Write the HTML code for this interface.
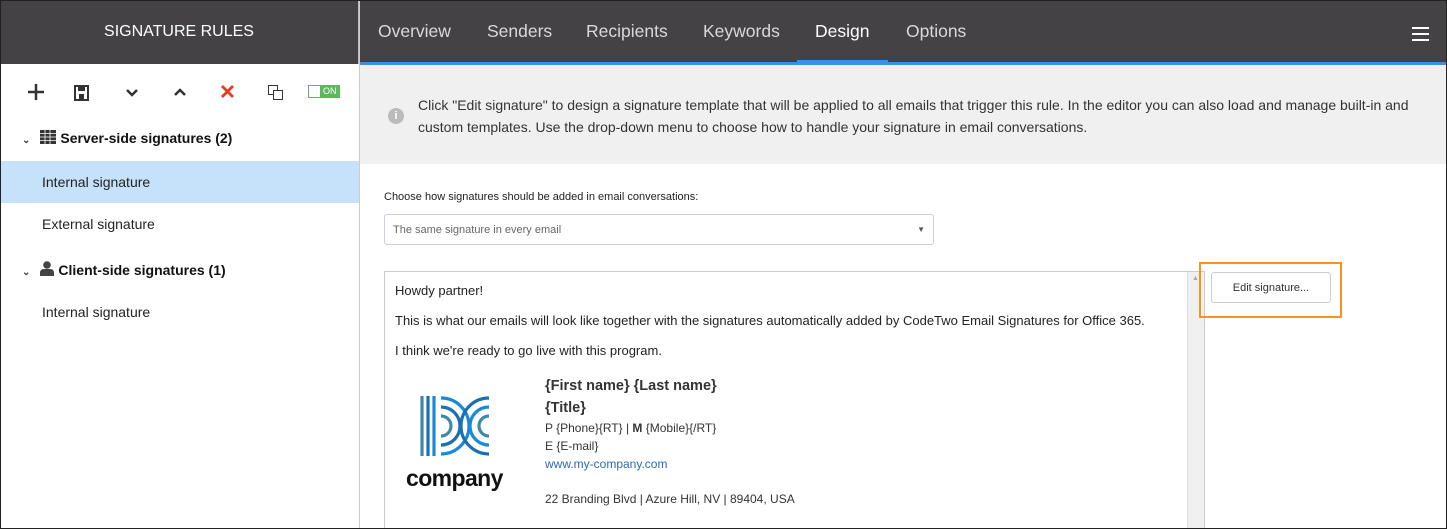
<!DOCTYPE html>
<html><head><meta charset="utf-8">
<style>
*{box-sizing:border-box;margin:0;padding:0}
html,body{width:1447px;height:529px;overflow:hidden}
body{background:#fff;font-family:"Liberation Sans",sans-serif;position:relative}
.frame{position:absolute;left:0;top:0;width:1447px;height:529px;border:1px solid #222;pointer-events:none;z-index:10}
.side{position:absolute;left:0;top:0;width:360px;height:529px;border-right:1px solid #ccc}
.shead{height:64px;background:#444245;color:#fff;font-size:16px;text-align:center;line-height:64px;border-right:1px solid #bbb}
.tool{position:absolute;top:82px;height:20px}
.grp{position:absolute;left:22px;font-size:14px;font-weight:bold;color:#111}
.item{position:absolute;left:0;width:359px;height:42px;line-height:42px;padding-left:42px;font-size:14px;color:#222}
.top{position:absolute;left:360px;top:0;width:1087px;height:62px;background:#444245}
.tab{position:absolute;top:0;line-height:62px;font-size:17.5px;color:#d9d9d9}
.blue{position:absolute;left:360px;top:62px;width:1087px;height:3px;background:#3c8fe8}
.info{position:absolute;left:360px;top:65px;width:1087px;height:99px;background:#f0f0f0;font-size:14px;color:#333;line-height:22px;padding:29px 24px 0 58px}
.sig{position:absolute;left:384px;top:271px;width:821px;height:258px;border:1px solid #ccc;border-bottom:none;overflow:hidden}
.sig p{font-size:13px;color:#222;margin-left:10px}
</style></head><body>
<div class="frame"></div>
<div class="side">
<div class="shead">SIGNATURE RULES</div>
<svg class="tool" style="left:27px" width="18" height="20"><path d="M9 2v16M1 10h16" stroke="#333" stroke-width="2.5"/></svg>
<svg class="tool" style="left:73px" width="18" height="20"><rect x="2" y="4" width="13" height="14" fill="none" stroke="#333" stroke-width="2"/><rect x="5" y="5" width="7" height="4" fill="#333"/><rect x="6" y="12" width="5" height="6" fill="#333"/></svg>
<svg class="tool" style="left:124px" width="16" height="20"><path d="M3 8l5 5 5-5" fill="none" stroke="#333" stroke-width="2.5"/></svg>
<svg class="tool" style="left:172px" width="16" height="20"><path d="M3 13l5-5 5 5" fill="none" stroke="#333" stroke-width="2.5"/></svg>
<svg class="tool" style="left:220px" width="16" height="20"><path d="M2 4l11 11M13 4L2 15" stroke="#e0401c" stroke-width="2.8"/></svg>
<svg class="tool" style="left:267px" width="18" height="20"><rect x="1.5" y="3.5" width="9" height="9" fill="none" stroke="#333"/><rect x="6.5" y="8.5" width="9" height="9" fill="#fff" stroke="#333"/></svg>
<div style="position:absolute;left:308px;top:85px;width:32px;height:13px;background:#5cb85c;border:1px solid #5cb85c"><div style="width:11px;height:11px;background:#fff"></div><span style="position:absolute;left:14px;top:0;font-size:9px;color:#fff;line-height:11px">ON</span></div>
<div class="grp" style="top:130px"><span style="font-size:10px;color:#444;margin-right:10px">&#8964;</span><svg width="16" height="14" style="vertical-align:-1px;margin-right:4px"><rect x="0" y="0" width="16" height="14" fill="#333"/><path d="M0 3.5h16M0 7h16M0 10.5h16M5 0v14M10 0v14" stroke="#fff" stroke-width="0.8"/></svg>Server-side signatures (2)</div>
<div class="item" style="top:161px;background:#c6e1fa">Internal signature</div>
<div class="item" style="top:203px">External signature</div>
<div class="grp" style="top:261px"><span style="font-size:10px;color:#444;margin-right:10px">&#8964;</span><svg width="14" height="15" style="vertical-align:-1px;margin-right:4px"><circle cx="7" cy="4" r="3.8" fill="#444"/><path d="M0 15v-3q0-4 4-4h6q4 0 4 4v3z" fill="#444"/></svg>Client-side signatures (1)</div>
<div class="item" style="top:291px">Internal signature</div>
</div>
<div class="top">
<span class="tab" style="left:18px">Overview</span>
<span class="tab" style="left:127px">Senders</span>
<span class="tab" style="left:226px">Recipients</span>
<span class="tab" style="left:343px">Keywords</span>
<span class="tab" style="left:455px;color:#fff">Design</span>
<span class="tab" style="left:546px">Options</span>
<div style="position:absolute;left:1052px;top:27px;width:17px;height:2px;background:#fff;box-shadow:0 6px 0 #fff,0 12px 0 #fff"></div>
</div>
<div class="blue"></div>
<div style="position:absolute;left:797px;top:60px;width:91px;height:3px;background:#3c8fe8"></div>
<div class="info"><span style="position:absolute;left:28px;top:43px;width:16px;height:16px;border-radius:50%;background:#bbb;color:#fff;font-size:11px;font-weight:bold;text-align:center;line-height:16px">i</span>Click "Edit signature" to design a signature template that will be applied to all emails that trigger this rule. In the editor you can also load and manage built-in and custom templates. Use the drop-down menu to choose how to handle your signature in email conversations.</div>
<div style="position:absolute;left:384px;top:191px;font-size:11px;color:#222">Choose how signatures should be added in email conversations:</div>
<div style="position:absolute;left:384px;top:214px;width:550px;height:31px;border:1px solid #ccd;border-radius:3px;font-size:11px;color:#666;line-height:30px;padding-left:8px">The same signature in every email<span style="position:absolute;right:8px;top:0;font-size:8px;color:#555">&#9660;</span></div>
<div class="sig">
<div style="position:absolute;right:0;top:0;width:17px;height:270px;background:#f0f0f0;border-left:1px solid #ddd"><span style="position:absolute;left:4px;top:3px;font-size:7px;color:#aaa">&#9650;</span></div>
<p style="position:absolute;top:11px">Howdy partner!</p>
<p style="position:absolute;top:41px">This is what our emails will look like together with the signatures automatically added by CodeTwo Email Signatures for Office 365.</p>
<p style="position:absolute;top:71px">I think we're ready to go live with this program.</p>
<svg style="position:absolute;left:30px;top:118px" width="80" height="70" viewBox="0 0 80 70">
<g fill="none" stroke-width="3.2">
<path d="M7 6v60" stroke="#3d8aa8"/><path d="M13 6v60" stroke="#1a6fb5"/><path d="M19 6v60" stroke="#1a8ad8"/>
<path d="M26 8a28 28 0 0 1 0 56" stroke="#1a8ad8"/><path d="M26 17a19 19 0 0 1 0 38" stroke="#1a6fb5"/><path d="M26 26a10 10 0 0 1 0 20" stroke="#3d8aa8"/>
<path d="M74 8a28 28 0 0 0 0 56" stroke="#1a6fb5"/><path d="M74 17a19 19 0 0 0 0 38" stroke="#1a8ad8"/><path d="M74 26a10 10 0 0 0 0 20" stroke="#3d8aa8"/>
</g></svg>
<div style="position:absolute;left:21px;top:193px;font-size:23px;font-weight:bold;color:#111;letter-spacing:-0.6px">company</div>
<div style="position:absolute;left:160px;top:103px;font-size:13px;color:#333;line-height:18px">
<div style="font-size:14.5px;font-weight:bold;line-height:22px">{First name} {Last name}</div>
<div style="font-size:14.5px;font-weight:bold;line-height:22px">{Title}</div>
<div style="font-size:12px">P {Phone}{RT} | <b>M</b> {Mobile}{/RT}</div>
<div style="font-size:12px">E {E-mail}</div>
<div style="font-size:12px;color:#2a6ab8">www.my-company.com</div>
<div style="font-size:12px;margin-top:17px">22 Branding Blvd | Azure Hill, NV | 89404, USA</div>
</div>
</div>
<div style="position:absolute;left:1199px;top:262px;width:143px;height:56px;border:2px solid #f7941d"></div>
<div style="position:absolute;left:1211px;top:272px;width:120px;height:31px;border:1px solid #ccc;border-radius:3px;font-size:11px;color:#333;text-align:center;line-height:30px">Edit signature...</div>
</body></html>
